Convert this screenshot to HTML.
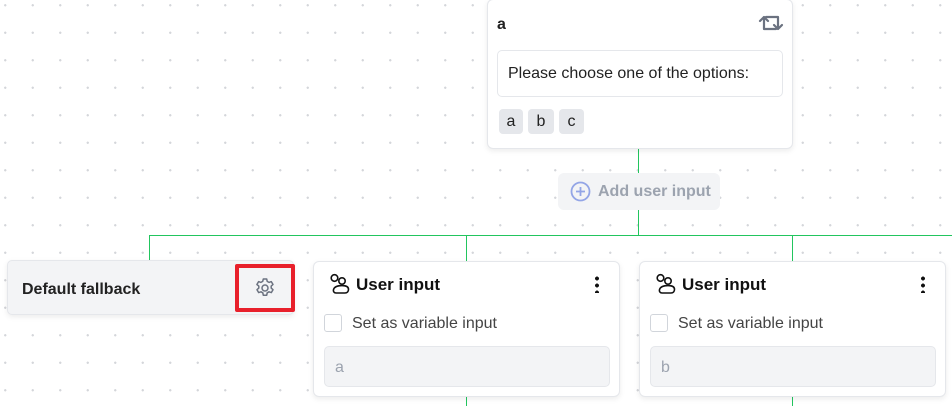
<!DOCTYPE html>
<html><head><style>
*{box-sizing:border-box;margin:0;padding:0}
body{width:952px;height:406px;overflow:hidden;position:relative;background:#fff;font-family:"Liberation Sans",sans-serif;
background-image:radial-gradient(circle,#d4d6da 1px,transparent 1.3px);background-size:27.5px 27.5px;background-position:-8.5px -8.5px}
.ln{position:absolute;background:#22c55e}
.card{position:absolute;background:#fff;border:1px solid #e5e7eb;border-radius:6px;box-shadow:0 2px 6px rgba(0,0,0,.08)}
.chip{position:absolute;top:109px;height:25px;background:#e5e7eb;border-radius:4px;font-size:16px;color:#222;text-align:center;line-height:25px}
.ui-title{position:absolute;left:42px;top:13px;font-size:17px;font-weight:bold;color:#111}
</style></head><body>
<div class="ln" style="left:638px;top:148px;width:1px;height:88px"></div>
<div class="ln" style="left:149px;top:235px;width:803px;height:1px"></div>
<div class="ln" style="left:149px;top:235px;width:1px;height:26px"></div>
<div class="ln" style="left:466px;top:235px;width:1px;height:171px"></div>
<div class="ln" style="left:792px;top:235px;width:1px;height:171px"></div>

<div class="card" style="left:487px;top:-1px;width:306px;height:150px">
 <div style="position:absolute;left:9px;top:16px;font-size:16px;font-weight:bold;color:#222">a</div>
 <svg style="position:absolute;left:270px;top:12px" width="26" height="22" viewBox="0 0 26 22" fill="none" stroke="#6b7280" stroke-width="2.2" stroke-linecap="round" stroke-linejoin="round"><path d="M2 9l4-4 4 4M6 5v12h12"/><path d="M24 13l-4 4-4-4M20 17V5H8"/></svg>
 <div style="position:absolute;left:9px;top:50px;width:286px;height:47px;border:1px solid #e5e7eb;border-radius:5px;font-size:16px;color:#222;padding:14px 0 0 10px">Please choose one of the options:</div>
</div>
<div class="chip" style="left:499px;width:24px">a</div>
<div class="chip" style="left:528px;width:26px">b</div>
<div class="chip" style="left:559px;width:25px">c</div>

<div style="position:absolute;left:558px;top:173px;width:162px;height:37px;background:#f3f4f6;border-radius:6px">
 <svg style="position:absolute;left:12px;top:8px" width="21" height="21" viewBox="0 0 21 21" fill="none" stroke="#93a5e6" stroke-width="1.8"><circle cx="10.5" cy="10.5" r="9"/><path d="M10.5 6v9M6 10.5h9"/></svg>
 <div style="position:absolute;left:40px;top:10px;font-size:16px;font-weight:bold;color:#9ca3af">Add user input</div>
</div>

<div style="position:absolute;left:7px;top:260px;width:287px;height:55px;background:#f3f4f6;border:1px solid #e5e7eb;border-radius:5px;box-shadow:0 2px 6px rgba(0,0,0,.08)">
 <div style="position:absolute;left:14px;top:20px;font-size:16px;font-weight:bold;color:#222">Default fallback</div>
</div>
<div style="position:absolute;left:235px;top:264px;width:60px;height:48px;border:4px solid #e8202b;border-radius:2px">
 <svg style="position:absolute;left:14px;top:8px" width="24" height="24" viewBox="0 0 24 24" fill="none" stroke="#6b7280" stroke-width="1.5" stroke-linejoin="round"><path d="M10.3 3h3.4l.5 2.4 1.8 1 2.3-.8 1.7 2.9-1.8 1.6v2l1.8 1.6-1.7 2.9-2.3-.8-1.8 1-.5 2.4h-3.4l-.5-2.4-1.8-1-2.3.8-1.7-2.9 1.8-1.6v-2L3.9 8.5l1.7-2.9 2.3.8 1.8-1z"/><circle cx="12" cy="12" r="3"/></svg>
</div>

<div class="card" style="left:313px;top:261px;width:307px;height:136px">
 <svg style="position:absolute;left:15px;top:11px" width="22" height="22" viewBox="0 0 22 22" fill="none" stroke="#111" stroke-width="1.6"><circle cx="5.5" cy="5" r="3.3"/><circle cx="13" cy="8" r="3.2"/><path d="M7 20c-2 0-3-1.6-2.5-3.4.8-2.4 3.5-4 8.5-4s6.5 1.6 6.5 3.8S18 20 16 20z"/></svg>
 <div class="ui-title">User input</div>
 <div style="position:absolute;right:20px;top:13px;width:4px;height:18px;background:radial-gradient(circle,#111 1.8px,transparent 2.1px) 0 0/4px 7px repeat-y"></div>
 <div style="position:absolute;left:10px;top:52px;width:18px;height:18px;border:1px solid #d1d5db;border-radius:3px"></div>
 <div style="position:absolute;left:38px;top:53px;font-size:16px;color:#444">Set as variable input</div>
 <div style="position:absolute;left:10px;top:84px;width:286px;height:41px;background:#f3f4f6;border:1px solid #e5e7eb;border-radius:5px;font-size:16px;color:#9ca3af;padding:12px 0 0 10px">a</div>
</div>
<div class="card" style="left:639px;top:261px;width:307px;height:136px">
 <svg style="position:absolute;left:15px;top:11px" width="22" height="22" viewBox="0 0 22 22" fill="none" stroke="#111" stroke-width="1.6"><circle cx="5.5" cy="5" r="3.3"/><circle cx="13" cy="8" r="3.2"/><path d="M7 20c-2 0-3-1.6-2.5-3.4.8-2.4 3.5-4 8.5-4s6.5 1.6 6.5 3.8S18 20 16 20z"/></svg>
 <div class="ui-title">User input</div>
 <div style="position:absolute;right:20px;top:13px;width:4px;height:18px;background:radial-gradient(circle,#111 1.8px,transparent 2.1px) 0 0/4px 7px repeat-y"></div>
 <div style="position:absolute;left:10px;top:52px;width:18px;height:18px;border:1px solid #d1d5db;border-radius:3px"></div>
 <div style="position:absolute;left:38px;top:53px;font-size:16px;color:#444">Set as variable input</div>
 <div style="position:absolute;left:10px;top:84px;width:286px;height:41px;background:#f3f4f6;border:1px solid #e5e7eb;border-radius:5px;font-size:16px;color:#9ca3af;padding:12px 0 0 10px">b</div>
</div>
</body></html>
